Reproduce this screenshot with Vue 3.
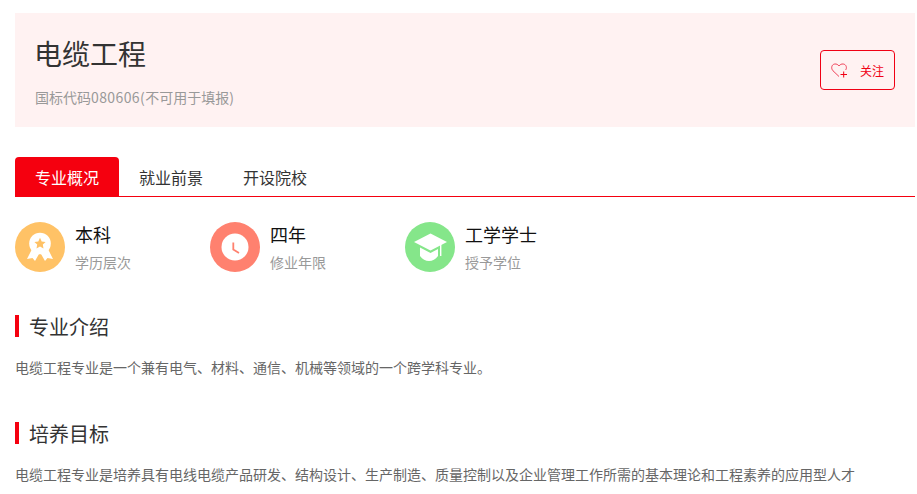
<script setup>
const stats = [
  { key: 'a', value: '本科', label: '学历层次', color: '#ffc266' },
  { key: 'b', value: '四年', label: '修业年限', color: '#ff816f' },
  { key: 'c', value: '工学学士', label: '授予学位', color: '#85e68a' },
]
</script>

<template>
  <div class="page">
    <header class="hero">
      <div>
        <h1 class="title">电缆工程</h1>
        <p class="code">国标代码<span class="latin">080606(</span>不可用于填报<span class="latin">)</span></p>
      </div>
      <button class="follow">
        <svg class="heart" width="18" height="18" viewBox="0 0 18 18" fill="none" stroke="#f0435a" stroke-width="1">
          <path d="M9 15.5 L3 9.8 C0.8 7.6 1.4 3.4 4.8 3 C6.6 2.8 8 3.6 9 5 C10 3.6 11.4 2.8 13.2 3 C16.4 3.4 17.2 7 15.6 9" />
          <path d="M10.5 13.5 H17 M13.7 10.5 V16.5" stroke="#f00014" />
        </svg>
        <span>关注</span>
      </button>
    </header>

    <nav class="tabs">
      <a class="tab active">专业概况</a>
      <a class="tab">就业前景</a>
      <a class="tab">开设院校</a>
    </nav>

    <section class="stats">
      <div v-for="s in stats" :key="s.key" class="stat">
        <span class="badge" :style="{ background: s.color }">
          <svg v-if="s.key === 'a'" width="36" height="36" viewBox="0 0 36 36">
            <path d="M10 20 L5 30 L10.5 29 L13 32 L17 25 Z M26 20 L31 30 L25.5 29 L23 32 L19 25 Z" fill="#fff" />
            <circle cx="18" cy="14.5" r="10.8" fill="#fff" />
            <path d="M18 8.8 L19.7 12.4 L23.6 12.9 L20.8 15.5 L21.5 19.4 L18 17.5 L14.5 19.4 L15.2 15.5 L12.4 12.9 L16.3 12.4 Z" fill="#ffc266" />
          </svg>
          <svg v-else-if="s.key === 'b'" width="36" height="36" viewBox="0 0 36 36">
            <circle cx="18" cy="18" r="13.5" fill="#fff" />
            <path d="M16.3 13.5 V20.5 L22 24" fill="none" stroke="#ff816f" stroke-width="1.8" />
          </svg>
          <svg v-else width="36" height="36" viewBox="0 0 36 36">
            <path d="M18.5 4.5 L35 13 L18.5 21.5 L2 13 Z" fill="#fff" />
            <path d="M8 18.5 L18.5 24 L26 20 V27 C23.5 30.5 20.5 32 17 32 C13.5 32 10.5 30.5 8 27 Z" fill="#fff" />
            <rect x="28" y="15" width="1.4" height="12" fill="#fff" />
          </svg>
        </span>
        <div class="stat-text">
          <div class="value">{{ s.value }}</div>
          <div class="label">{{ s.label }}</div>
        </div>
      </div>
    </section>

    <section class="block first">
      <h2 class="heading">专业介绍</h2>
      <p class="text">电缆工程专业是一个兼有电气、材料、通信、机械等领域的一个跨学科专业。</p>
    </section>

    <section class="block second">
      <h2 class="heading">培养目标</h2>
      <p class="text">电缆工程专业是培养具有电线电缆产品研发、结构设计、生产制造、质量控制以及企业管理工作所需的基本理论和工程素养的应用型人才</p>
    </section>
  </div>
</template>

<style>
html, body { margin: 0; background: #fff; overflow: hidden; }
</style>

<style scoped>
.page {
  width: 900px;
  height: 494px;
  margin-left: 15px;
  padding-top: 13px;
  box-sizing: border-box;
  overflow: hidden;
  font-family: "Noto Sans CJK SC", "Liberation Sans", sans-serif;
}
.hero {
  height: 114px;
  background: #fff2f2;
  padding: 0 20px;
  box-sizing: border-box;
  display: flex;
  align-items: center;
  justify-content: space-between;
}
.title {
  margin: 0 0 0 -1px;
  font-size: 28px;
  line-height: 40px;
  font-weight: 400;
  color: #333;
}
.code {
  margin: 14px 0 0;
  font-size: 14px;
  line-height: 20px;
  color: #999;
}
.latin { letter-spacing: 0.4px; }
.follow {
  width: 75px;
  height: 40px;
  border: 1px solid #f00014;
  border-radius: 4px;
  background: transparent;
  display: flex;
  align-items: center;
  padding: 0 0 0 9px;
  box-sizing: border-box;
  font-family: inherit;
  font-size: 12px;
  color: #f00014;
}
.heart { margin-right: 12px; }
.tabs {
  margin-top: 30px;
  height: 40px;
  box-sizing: border-box;
  display: flex;
  border-bottom: 1px solid #f5000f;
}
.tab {
  padding: 0 20px;
  height: 39px;
  line-height: 40px;
  font-size: 16px;
  color: #333;
}
.tab.active {
  background: #f5000f;
  color: #fff;
  border-radius: 4px 4px 0 0;
}
.stats {
  margin-top: 25px;
  display: flex;
}
.stat {
  width: 195px;
  display: flex;
  align-items: center;
}
.badge {
  width: 50px;
  height: 50px;
  border-radius: 50%;
  display: flex;
  align-items: center;
  justify-content: center;
  flex: none;
}
.stat-text { margin-left: 10px; }
.value {
  font-size: 18px;
  line-height: 24px;
  color: #111;
}
.label {
  margin-top: 6px;
  font-size: 14px;
  line-height: 20px;
  color: #999;
}
.block.first { margin-top: 43px; }
.block.second { margin-top: 43px; }
.heading {
  margin: 0;
  height: 22px;
  padding-left: 10px;
  border-left: 4px solid #f5000f;
  font-size: 20px;
  font-weight: 400;
  line-height: 24px;
  color: #333;
}
.text {
  margin: 18px 0 0;
  font-size: 14px;
  line-height: 24px;
  color: #666;
}
</style>
